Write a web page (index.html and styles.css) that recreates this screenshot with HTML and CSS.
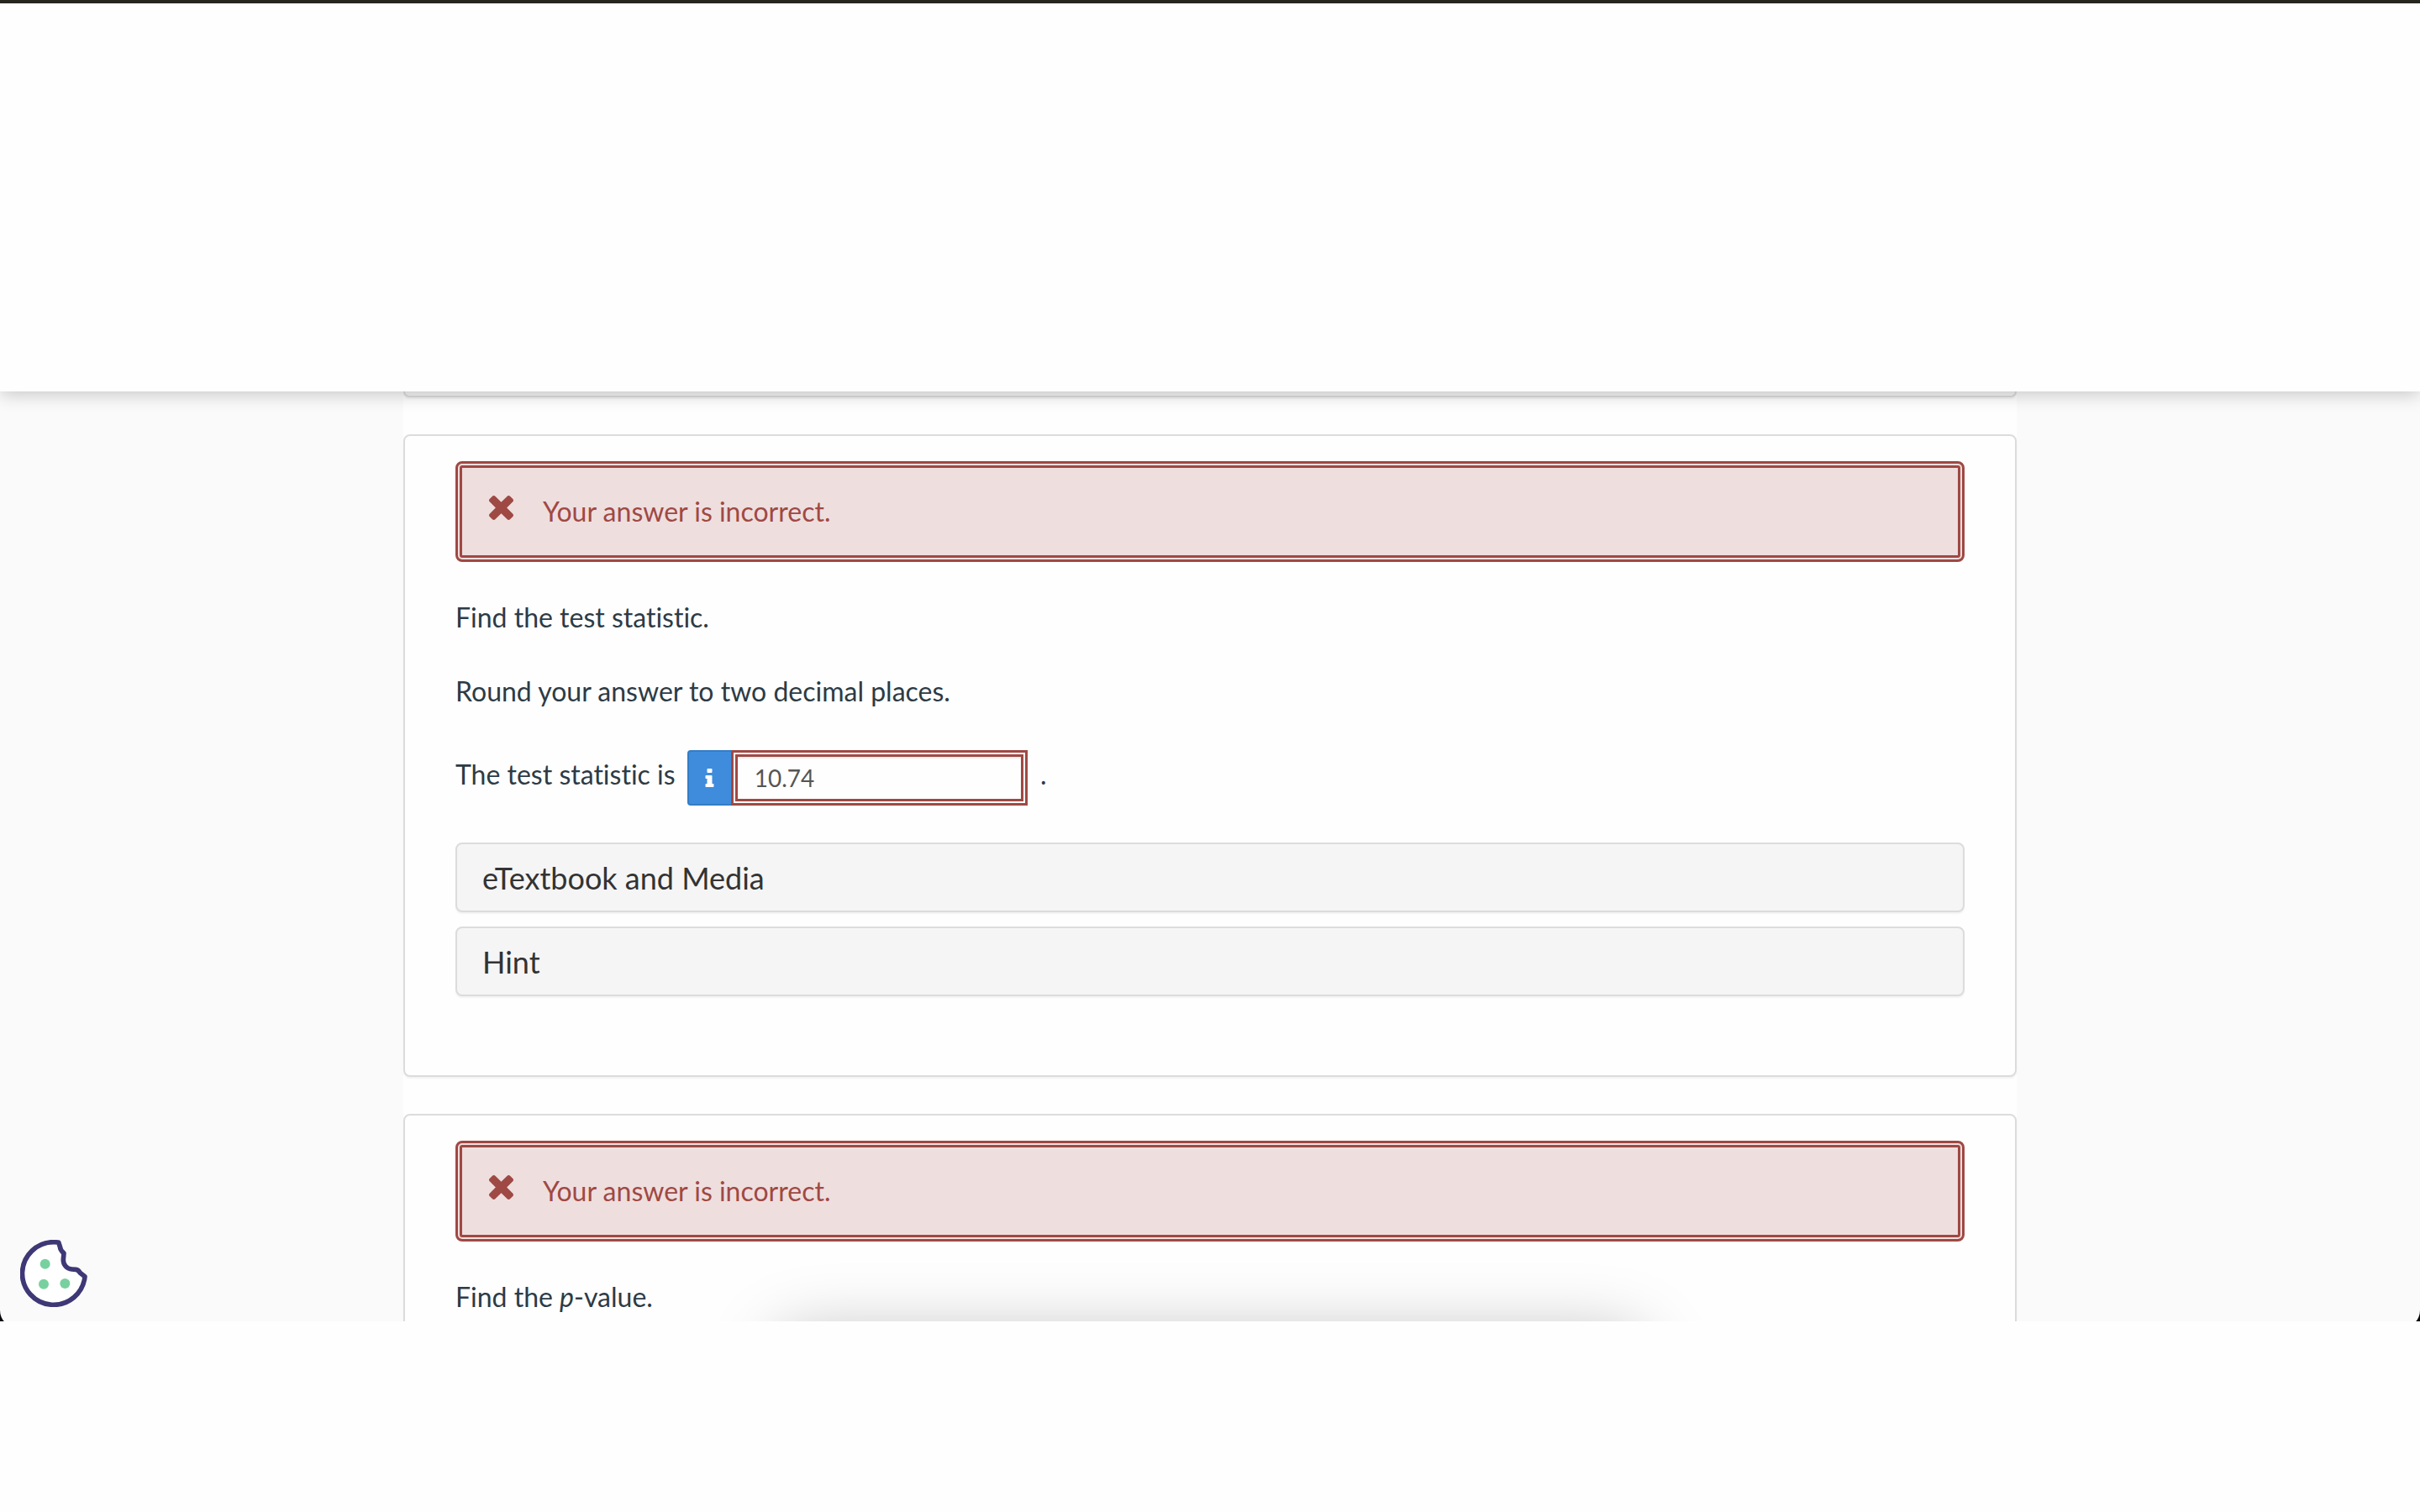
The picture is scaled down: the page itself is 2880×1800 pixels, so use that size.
FILE: index.html
```html
<!DOCTYPE html>
<html lang="en">
<head>
<meta charset="utf-8">
<title>Question</title>
<link rel="stylesheet" href="styles.css">
</head>
<body>
<svg class="sprite" aria-hidden="true">
  <symbol id="times" viewBox="302 366 1188 1188"><path d="M1490 1322q0 40-28 68l-136 136q-28 28-68 28t-68-28l-294-294-294 294q-28 28-68 28t-68-28l-136-136q-28-28-28-68t28-68l294-294-294-294q-28-28-28-68t28-68l136-136q28-28 68-28t68 28l294 294 294-294q28-28 68-28t68 28l136 136q28 28 28 68t-28 68l-294 294 294 294q28 28 28 68z"/></symbol>
</svg>
<header class="topbar"></header>
<main class="window">
  <div class="page">
    <div class="column">
      <div class="card card-end"></div>
      <section class="card">
        <div class="alert" role="alert">
          <svg class="alert-icon" aria-hidden="true"><use href="#times"/></svg>
          <span>Your answer is incorrect.</span>
        </div>
        <div class="question">
          <p>Find the test statistic.</p>
          <p>Round your answer to two decimal places.</p>
          <div class="answer-row">
            <label for="statistic">The test statistic is</label>
            <span class="answer">
              <button class="info" type="button" aria-label="Information"><svg viewBox="576 128 640 1408" aria-hidden="true"><path d="M1216 1344v128q0 26-19 45t-45 19h-512q-26 0-45-19t-19-45v-128q0-26 19-45t45-19h64v-384h-64q-26 0-45-19t-19-45v-128q0-26 19-45t45-19h384q26 0 45 19t19 45v576h64q26 0 45 19t19 45zm-128-1152v192q0 26-19 45t-45 19h-256q-26 0-45-19t-19-45v-192q0-26 19-45t45-19h256q26 0 45 19t19 45z"/></svg></button>
              <input class="field" id="statistic" type="text" value="10.74">
            </span>
            .
          </div>
        </div>
        <div class="resources">
          <button class="resource" type="button">eTextbook and Media</button>
          <button class="resource" type="button">Hint</button>
        </div>
      </section>
      <section class="card">
        <div class="alert" role="alert">
          <svg class="alert-icon" aria-hidden="true"><use href="#times"/></svg>
          <span>Your answer is incorrect.</span>
        </div>
        <div class="question">
          <p>Find the <em>p</em>-value.</p>
        </div>
      </section>
    </div>
  </div>
  <div class="dock-shadow"></div>
  <button class="cookie" type="button" aria-label="Cookie preferences">
    <svg viewBox="0 0 240 240" aria-hidden="true">
      <path class="cookie-body" d="M137 9L120 8A112 112 0 1 0 231 131L214 118Q208 107 199 106L184 105C166 104 153 88 154 70L156 48Q143 37 142 24Z"/>
      <circle class="chip" cx="89" cy="86" r="18"/>
      <circle class="chip" cx="84" cy="158" r="18"/>
      <circle class="chip" cx="160" cy="156" r="18"/>
    </svg>
  </button>
</main>
</body>
</html>
```
FILE: styles.css
```css
* {
  box-sizing: border-box;
}

body {
  margin: 0;
  height: 100vh;
  padding-bottom: 227px;
  display: flex;
  flex-direction: column;
  overflow: hidden;
  background: #fefefe;
  color: #2d3b45;
  font-family: Lato, sans-serif;
  font-size: 32px;
  font-variant-ligatures: none;
  line-height: 48px;
}

button,
input {
  font-family: inherit;
  font-variant-ligatures: inherit;
  margin: 0;
}

.sprite {
  display: none;
}

.topbar {
  flex: none;
  height: 466px;
  border-top: 4px solid #26261f;
  background: #fefefe;
  box-shadow: 0 4px 20px rgba(0, 0, 0, 0.2);
  position: relative;
  z-index: 1;
}

.window {
  flex: 1;
  min-height: 0;
  overflow: hidden;
  display: flex;
  position: relative;
  background: #04060c;
}

/* The pane's rounded foot runs a little past the window's edge. */
.page {
  flex: 1;
  margin-bottom: -7px;
  border-radius: 0 0 20px 20px;
  overflow: hidden;
  background: #fafafa;
}

.column {
  max-width: 1920px;
  margin: 0 auto;
  display: flex;
  flex-direction: column;
  gap: 44px;
  background: #fefefe;
}

.card {
  border: 2px solid #dcdcdc;
  border-radius: 8px;
  padding: 30px 60px 94px;
  background: #fefefe;
  box-shadow: 0 2px 2px rgba(0, 0, 0, 0.05);
}

.card-end {
  height: 7px;
  padding: 0;
  border-top: 0;
  border-radius: 0 0 8px 8px;
  background: #f5f5f5;
}

.alert {
  height: 120px;
  padding: 0 32px;
  display: flex;
  align-items: center;
  gap: 35px;
  border: 8px double #9f4944;
  border-radius: 8px;
  background: #efdede;
  color: #9f4944;
}

.alert-icon {
  width: 29px;
  height: 29px;
  margin-bottom: 10px;
  fill: currentColor;
}

.question {
  padding-top: 42px;
}

.question p {
  margin: 0 0 40px;
}

.answer-row {
  padding-top: 6px;
}

.answer {
  width: 405px;
  height: 66px;
  margin: 0 7px 0 6px;
  display: inline-flex;
  vertical-align: middle;
}

.info {
  width: 52px;
  padding: 0;
  display: flex;
  align-items: center;
  justify-content: center;
  border: 2px solid #337dc6;
  border-right: 0;
  border-radius: 4px 0 0 4px;
  background: #3f8cdd;
}

.info svg {
  width: 11px;
  height: 22px;
  fill: #fff;
}

.field {
  flex: 1;
  min-width: 0;
  padding: 0 20px;
  border: 8px double #9f4944;
  border-radius: 0;
  background: #fefefe;
  box-shadow: inset 0 2px 2px rgba(0, 0, 0, 0.08);
  color: #555;
  font-size: 28px;
}

.resources {
  padding-top: 44px;
  display: flex;
  flex-direction: column;
  gap: 17px;
}

.resource {
  height: 83px;
  padding: 0 30px;
  border: 2px solid #dcdcdc;
  border-radius: 8px;
  background: #f5f5f5;
  box-shadow: 0 2px 2px rgba(0, 0, 0, 0.05);
  color: #333;
  font-size: 36px;
  text-align: left;
}

/* Shadow thrown upwards by the panel below the window. */
.dock-shadow {
  position: absolute;
  top: calc(100% + 14px);
  left: calc(50% - 520px);
  width: 1040px;
  height: 200px;
  border-radius: 40px;
  box-shadow: 0 0 80px rgba(0, 0, 0, 0.26);
}

.cookie {
  position: absolute;
  left: 24px;
  bottom: 17px;
  width: 80px;
  height: 80px;
  padding: 0;
  border: 0;
  background: none;
}

.cookie svg {
  display: block;
  width: 100%;
  height: 100%;
}

.cookie-body {
  fill: #fff;
  stroke: #3e3876;
  stroke-width: 17;
  stroke-linejoin: round;
}

.chip {
  fill: #79d09f;
}
```
